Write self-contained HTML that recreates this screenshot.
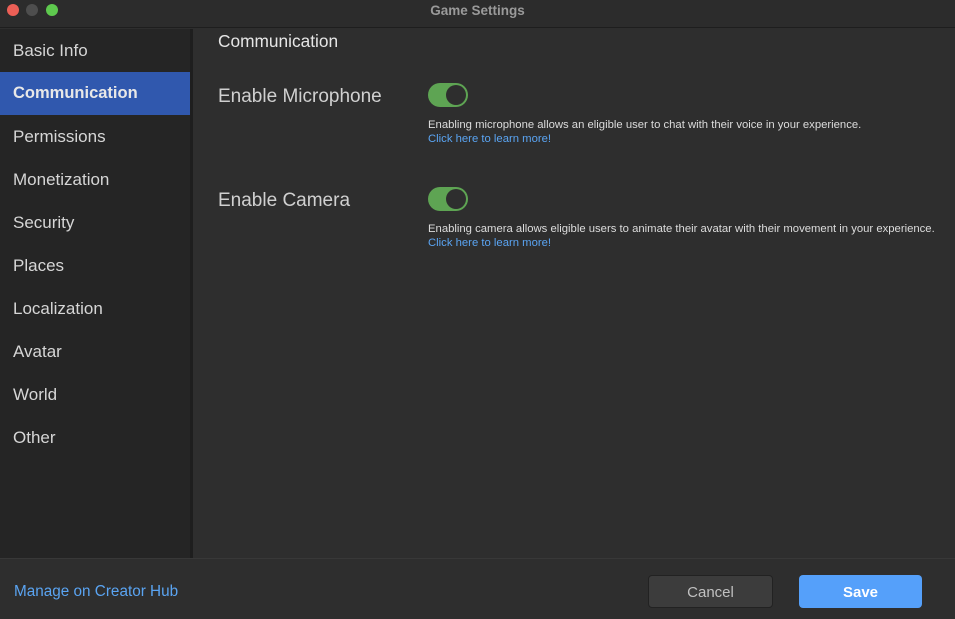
<!DOCTYPE html>
<html><head><meta charset="utf-8"><style>
*{margin:0;padding:0;box-sizing:border-box}
body{width:955px;height:619px;background:#2e2e2e;font-family:"Liberation Sans",sans-serif;position:relative;overflow:hidden;color:#e0e0e0}
.title{position:absolute;left:0;top:0;width:955px;height:28px;background:#2c2c2c;border-bottom:1px solid #1e1e1e}
.title .t{position:absolute;left:0;right:0;top:3px;text-align:center;font-size:13.5px;font-weight:bold;color:#9a9a9a}
.dot{position:absolute;top:4px;width:12px;height:12px;border-radius:50%}
.side{position:absolute;left:0;top:29px;width:190px;height:529px;background:#252525}
.div{position:absolute;left:190px;top:29px;width:3px;height:529px;background:#1e1e1e}
.item{height:43px;line-height:43px;padding-left:13px;font-size:17px;color:#d6d6d6}
.item.sel{background:#3058ae;color:#e8e8e8;font-weight:bold;font-size:16.5px}
.main{position:absolute;left:193px;top:29px;right:0;height:528px;background:#2e2e2e}
.foot{position:absolute;left:0;top:558px;width:955px;height:61px;background:#2e2e2e;border-top:1px solid #383838}
.h{position:absolute;left:218px;top:31px;font-size:17.3px;color:#e6e6e6}
.lbl{position:absolute;left:218px;font-size:19px;color:#d0d0d0}
.tog{position:absolute;left:428px;width:40px;height:24px;border-radius:12px;background:#5ea453}
.tog::after{content:"";position:absolute;right:2px;top:2px;width:20px;height:20px;border-radius:50%;background:#2e2e2e}
.desc{position:absolute;left:428px;font-size:11.3px;color:#dcdcdc;line-height:14px}
.desc a{color:#5aa4f2;text-decoration:none}
.link{position:absolute;left:14px;top:583px;font-size:15.3px;color:#5aa4f2}
.btn{position:absolute;top:575px;height:33px;border-radius:4px;font-size:15px;text-align:center;line-height:33px}
</style></head><body>
<div class="title">
<div class="dot" style="left:7px;background:#ec5f56"></div>
<div class="dot" style="left:26px;background:#4e4e4e"></div>
<div class="dot" style="left:46px;background:#5ec94e"></div>
<div class="t">Game Settings</div>
</div>
<div class="side">
<div class="item">Basic Info</div>
<div class="item sel">Communication</div>
<div class="item">Permissions</div>
<div class="item">Monetization</div>
<div class="item">Security</div>
<div class="item">Places</div>
<div class="item">Localization</div>
<div class="item">Avatar</div>
<div class="item">World</div>
<div class="item">Other</div>
</div>
<div class="div"></div>
<div class="main"></div>
<div class="h">Communication</div>
<div class="lbl" style="top:86px">Enable Microphone</div>
<div class="tog" style="top:83px"></div>
<div class="desc" style="top:118px">Enabling microphone allows an eligible user to chat with their voice in your experience.<br><a>Click here to learn more!</a></div>
<div class="lbl" style="top:190px">Enable Camera</div>
<div class="tog" style="top:187px"></div>
<div class="desc" style="top:222px">Enabling camera allows eligible users to animate their avatar with their movement in your experience.<br><a>Click here to learn more!</a></div>
<div class="foot"></div>
<div class="link">Manage on Creator Hub</div>
<div class="btn" style="left:648px;width:125px;background:#3c3c3c;border:1px solid #222;color:#c0c0c0;line-height:33px">Cancel</div>
<div class="btn" style="left:799px;width:123px;background:#55a0fa;color:#fff;font-weight:bold;line-height:35px">Save</div>
</body></html>
